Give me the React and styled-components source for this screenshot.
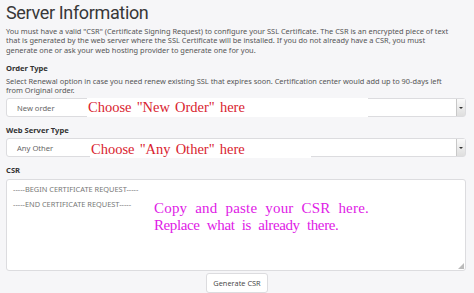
import React from "react";
import styled, { createGlobalStyle } from "styled-components";

const Global = createGlobalStyle`
  html, body { margin: 0; padding: 0; background: #f6f6f8; }
  body { font-family: "Noto Sans", "Open Sans", sans-serif; color: #555; }
  * { box-sizing: border-box; }
`;

const Page = styled.div`
  width: 474px;
  height: 293px;
  padding: 0 8px 0 6px;
  overflow: hidden;
`;

const Title = styled.h1`
  margin: 0;
  padding-top: 1px;
  height: 27px;
  font-family: Roboto, "Noto Sans", sans-serif;
  font-weight: 400;
  font-size: 18px;
  line-height: 24px;
  color: #383838;
  letter-spacing: -0.35px;
`;

const Para = styled.p`
  margin: 0;
  font-size: 7.42px;
  line-height: 9.3px;
  color: #555;
`;

const Line = styled.span`
  display: block;
  white-space: nowrap;
`;

const Label = styled.div`
  font-size: 7.6px;
  font-weight: 700;
  color: #333;
  line-height: 10px;
  margin-top: ${(p) => p.$mt}px;
  margin-bottom: ${(p) => p.$mb}px;
`;

const Field = styled.div`
  position: relative;
  height: ${(p) => p.$h}px;
  margin-top: ${(p) => p.$mt || 0}px;
  background: #fff;
  border: 1px solid #dcdcdf;
  border-radius: 3px;
  display: flex;
  align-items: center;
  padding-left: 10px;
  font-size: 7.6px;
  color: #666;
`;

const Arrow = styled.div`
  position: absolute;
  right: 0;
  top: 0;
  bottom: 0;
  width: 9px;
  border-left: 1px solid #c8c8c8;
  background: linear-gradient(#fafafa, #dedede);
  display: flex;
  align-items: center;
  justify-content: center;
  &::after {
    content: "";
    border-left: 2px solid transparent;
    border-right: 2px solid transparent;
    border-top: 2.5px solid #333;
  }
`;

const Note = styled.div`
  position: absolute;
  left: ${(p) => p.$left}px;
  top: ${(p) => p.$top}px;
  width: ${(p) => p.$w}px;
  height: ${(p) => p.$hh}px;
  background: #fff;
  display: flex;
  align-items: center;
  padding-left: 1px;
  font-family: "Liberation Serif", "DejaVu Serif", serif;
  font-size: 14.5px;
  color: #d9232f;
  word-spacing: 1.5px;
  white-space: nowrap;
`;

const TextArea = styled.div`
  position: relative;
  height: 92px;
  background: #fff;
  border: 1px solid #dcdcdf;
  border-radius: 3px;
  padding: 5px 0 0 6px;
  font-size: 7.4px;
  color: #777;
`;

const CsrLine = styled.div`
  line-height: 8px;
  white-space: nowrap;
  margin-bottom: ${(p) => p.$mb || 0}px;
`;

const Magenta = styled.div`
  position: absolute;
  left: 147px;
  top: 20px;
  font-family: "Liberation Serif", "DejaVu Serif", serif;
  font-size: 15px;
  line-height: 17px;
  color: #e020e6;
  word-spacing: 4px;
`;

const MagentaLine = styled.span`
  display: block;
  white-space: nowrap;
  letter-spacing: ${(p) => p.$ls}px;
`;

const Grip = styled.svg`
  position: absolute;
  right: 1px;
  bottom: 1px;
`;

const ButtonRow = styled.div`
  display: flex;
  justify-content: center;
  margin-top: 2px;
`;

const Button = styled.button`
  width: 62px;
  height: 20px;
  background: #fff;
  border: 1px solid #dcdcdf;
  border-radius: 3px;
  font-family: "Open Sans", "Noto Sans", sans-serif;
  font-size: 7.4px;
  color: #444;
  padding: 0;
  margin-left: 2px;
`;

export default function App() {
  return (
    <>
      <Global />
      <Page>
        <Title>Server Information</Title>
        <Para>
          <Line>You must have a valid "CSR" (Certificate Signing Request) to configure your SSL Certificate. The CSR is an encrypted piece of text</Line>
          <Line>that is generated by the web server where the SSL Certificate will be installed. If you do not already have a CSR, you must</Line>
          <Line>generate one or ask your web hosting provider to generate one for you.</Line>
        </Para>
        <Label $mt={8} $mb={4}>Order Type</Label>
        <Para>
          <Line>Select Renewal option in case you need renew existing SSL that expires soon. Certification center would add up to 90-days left</Line>
          <Line>from Original order.</Line>
        </Para>
        <Field $h={19} $mt={3}>
          New order
          <Arrow />
          <Note $left={80} $top={-1} $w={281} $hh={19}>Choose "New Order" here</Note>
        </Field>
        <Label $mt={8} $mb={3}>Web Server Type</Label>
        <Field $h={19}>
          Any Other
          <Arrow />
          <Note $left={83} $top={1} $w={221} $hh={18}>Choose "Any Other" here</Note>
        </Field>
        <Label $mt={8} $mb={4}>CSR</Label>
        <TextArea>
          <CsrLine $mb={7}>-----BEGIN CERTIFICATE REQUEST-----</CsrLine>
          <CsrLine>-----END CERTIFICATE REQUEST-----</CsrLine>
          <Magenta>
            <MagentaLine $ls={0.2}>Copy and paste your CSR here.</MagentaLine>
            <MagentaLine $ls={-0.4}>Replace what is already there.</MagentaLine>
          </Magenta>
          <Grip width="6" height="6" viewBox="0 0 6 6">
            <path d="M6 0 L6 6 L0 6 Z" fill="#bbb" />
          </Grip>
        </TextArea>
        <ButtonRow>
          <Button>Generate CSR</Button>
        </ButtonRow>
      </Page>
    </>
  );
}
